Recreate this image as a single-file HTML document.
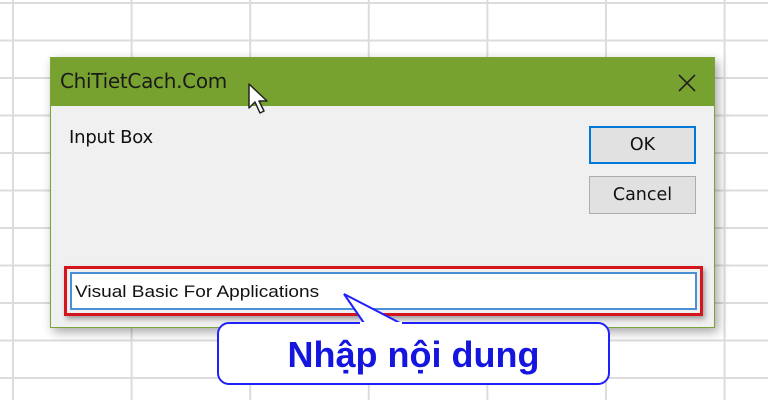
<!DOCTYPE html>
<html><head><meta charset="utf-8"><style>
body{margin:0;width:768px;height:400px;overflow:hidden;position:relative;font-family:"Liberation Sans","DejaVu Sans",sans-serif;
background-color:#fff;
background-image:linear-gradient(to right,#dcdcdc 2px,transparent 2px),linear-gradient(to bottom,#dcdcdc 2px,transparent 2px);
background-size:118.6px 37.5px;background-position:12px 2px;}
.dlg{position:absolute;left:50px;top:57px;width:665px;height:271px;background:#f0f0f0;border:1px solid #7aa33a;box-shadow:3px 4px 10px rgba(0,0,0,.35);box-sizing:border-box}
.title{position:absolute;left:0;top:0;right:0;height:48px;background:#78a22f}
.title span{position:absolute;left:9px;top:11px;font-family:"DejaVu Sans",sans-serif;font-size:20px;color:#1a1a1a;letter-spacing:-0.3px}
.x{position:absolute;left:626px;top:15px}
.lbl{position:absolute;left:18px;top:69px;font-family:"DejaVu Sans",sans-serif;font-size:18px;color:#111;letter-spacing:-0.2px}
.btn{position:absolute;left:538px;width:107px;height:38px;box-sizing:border-box;background:#e1e1e1;border:1px solid #adadad;font-family:"DejaVu Sans",sans-serif;font-size:17.5px;text-align:center;line-height:36px;color:#111}
.ok{top:68px;border:2px solid #0078d7;line-height:34px}
.cancel{top:118px}
.red{position:absolute;left:64px;top:266px;width:639px;height:50px;box-sizing:border-box;border:3px solid #d4151c;box-shadow:2px 3px 5px rgba(0,0,0,.35)}
.inp{position:absolute;left:70px;top:272px;width:627px;height:38px;box-sizing:border-box;background:#fff;border:2px solid #4a90d4;font-size:17px;padding:8px 0 0 3px;color:#111}
.inp span{display:inline-block;transform:scaleX(1.12);transform-origin:left}
.call{position:absolute;left:217px;top:322px;width:393px;height:63px;box-sizing:border-box;background:#fff;border:2px solid #2020ff;border-radius:12px}
.call span{position:absolute;left:0;right:0;top:10px;text-align:center;font-size:36px;font-weight:bold;color:#1515e0}
</style></head><body>
<div class="dlg">
 <div class="title"><span>ChiTietCach.Com</span>
  <svg class="x" width="20" height="20" viewBox="0 0 20 20"><path d="M2 2L18 18M18 2L2 18" stroke="#222" stroke-width="1.6"/></svg>
 </div>
 <div class="lbl">Input Box</div>
 <div class="btn ok">OK</div>
 <div class="btn cancel">Cancel</div>
</div>
<svg style="position:absolute;left:247px;top:82px" width="26" height="36" viewBox="0 0 26 36"><path d="M2 2L2 26L8 20L13 31L17 29L12 19L20 19Z" fill="#fff" stroke="#222" stroke-width="1.5" stroke-linejoin="round"/></svg>
<div class="red"></div>
<div class="inp"><span>Visual Basic For Applications</span></div>
<div class="call"><span>Nhập nội dung</span></div>
<svg style="position:absolute;left:330px;top:290px" width="80" height="40" viewBox="0 0 80 40"><path d="M14 4L34 33L70 33Z" fill="#fff"/><path d="M34 33L14 4L70 33" fill="none" stroke="#2020ff" stroke-width="2"/><rect x="30" y="32" width="42" height="6" fill="#fff"/></svg>
</body></html>
